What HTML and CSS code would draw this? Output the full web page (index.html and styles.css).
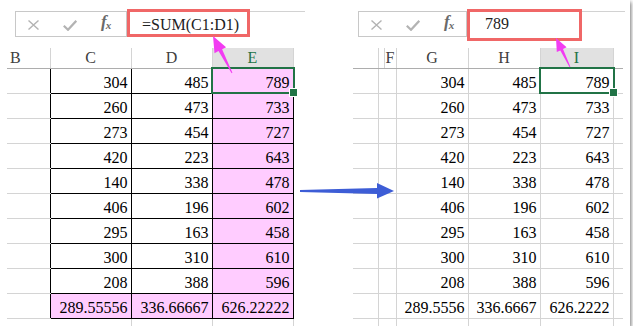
FILE: index.html
```html
<!DOCTYPE html>
<html>
<head>
<meta charset="utf-8">
<link rel="stylesheet" href="styles.css">
</head>
<body>
<div class="frame">
  <div class="panel panel-left">
    <div class="fbar">
      <div class="tools">
        <svg class="ico-x" viewBox="0 0 11 10"><path d="M0.5 0.5 L10.5 9.5 M10.5 0.5 L0.5 9.5" stroke="#b3b3b3" stroke-width="1.4" fill="none"/></svg>
        <svg class="ico-v" viewBox="0 0 14 11"><path d="M0.8 5.8 L5 9.8 L13.3 0.8" stroke="#b3b3b3" stroke-width="2.2" fill="none"/></svg>
        <span class="fx">f<sub>x</sub></span>
      </div>
      <div class="input">=SUM(C1:D1)</div>
      <div class="rest"></div>
    </div>
    <table class="sheet sheet-left">
      <colgroup><col class="w43"><col class="w81"><col class="w81"><col class="w81"></colgroup>
      <tr class="hd"><td class="hb">B</td><td>C</td><td>D</td><td class="hsel">E</td></tr>
      <tr><td class="b"></td><td class="k">304</td><td class="k">485</td><td class="k p sel">789</td></tr>
      <tr><td class="b"></td><td class="k">260</td><td class="k">473</td><td class="k p">733</td></tr>
      <tr><td class="b"></td><td class="k">273</td><td class="k">454</td><td class="k p">727</td></tr>
      <tr><td class="b"></td><td class="k">420</td><td class="k">223</td><td class="k p">643</td></tr>
      <tr><td class="b"></td><td class="k">140</td><td class="k">338</td><td class="k p">478</td></tr>
      <tr><td class="b"></td><td class="k">406</td><td class="k">196</td><td class="k p">602</td></tr>
      <tr><td class="b"></td><td class="k">295</td><td class="k">163</td><td class="k p">458</td></tr>
      <tr><td class="b"></td><td class="k">300</td><td class="k">310</td><td class="k p">610</td></tr>
      <tr><td class="b"></td><td class="k">208</td><td class="k">388</td><td class="k p">596</td></tr>
      <tr><td class="b"></td><td class="k p">289.55556</td><td class="k p">336.66667</td><td class="k p">626.22222</td></tr>
      <tr><td class="b"></td><td class="g"></td><td class="g"></td><td class="g"></td></tr>
    </table>
  </div>
  <div class="panel panel-right">
    <div class="fbar">
      <div class="tools">
        <svg class="ico-x" viewBox="0 0 11 10"><path d="M0.5 0.5 L10.5 9.5 M10.5 0.5 L0.5 9.5" stroke="#b3b3b3" stroke-width="1.4" fill="none"/></svg>
        <svg class="ico-v" viewBox="0 0 14 11"><path d="M0.8 5.8 L5 9.8 L13.3 0.8" stroke="#b3b3b3" stroke-width="2.2" fill="none"/></svg>
        <span class="fx">f<sub>x</sub></span>
      </div>
      <div class="input">789</div>
      <div class="rest"></div>
    </div>
    <table class="sheet sheet-right">
      <colgroup><col class="w25"><col class="w18"><col class="w72"><col class="w72"><col class="w73"><col class="w10"></colgroup>
      <tr class="hd"><td></td><td class="hf">F</td><td>G</td><td>H</td><td class="hsel">I</td><td class="end"></td></tr>
      <tr><td class="g"></td><td class="g"></td><td class="g">304</td><td class="g">485</td><td class="g sel">789</td><td class="e"></td></tr>
      <tr><td class="g"></td><td class="g"></td><td class="g">260</td><td class="g">473</td><td class="g">733</td><td class="e"></td></tr>
      <tr><td class="g"></td><td class="g"></td><td class="g">273</td><td class="g">454</td><td class="g">727</td><td class="e"></td></tr>
      <tr><td class="g"></td><td class="g"></td><td class="g">420</td><td class="g">223</td><td class="g">643</td><td class="e"></td></tr>
      <tr><td class="g"></td><td class="g"></td><td class="g">140</td><td class="g">338</td><td class="g">478</td><td class="e"></td></tr>
      <tr><td class="g"></td><td class="g"></td><td class="g">406</td><td class="g">196</td><td class="g">602</td><td class="e"></td></tr>
      <tr><td class="g"></td><td class="g"></td><td class="g">295</td><td class="g">163</td><td class="g">458</td><td class="e"></td></tr>
      <tr><td class="g"></td><td class="g"></td><td class="g">300</td><td class="g">310</td><td class="g">610</td><td class="e"></td></tr>
      <tr><td class="g"></td><td class="g"></td><td class="g">208</td><td class="g">388</td><td class="g">596</td><td class="e"></td></tr>
      <tr><td class="g"></td><td class="g"></td><td class="g">289.5556</td><td class="g">336.6667</td><td class="g">626.2222</td><td class="e"></td></tr>
      <tr><td class="g"></td><td class="g"></td><td class="g"></td><td class="g"></td><td class="g"></td><td class="e"></td></tr>
    </table>
  </div>
  <svg class="arrows" width="630" height="326" viewBox="0 0 630 326">
    <polygon points="213,36 226.1,47.2 222.1,49.3 232.4,72.8 231.6,73.2 218.5,51.1 214.5,53.2" fill="#f23cf2"/>
    <polygon points="556,38 566.6,47.3 563,49 570.4,66.8 569.6,67.2 560.3,50.4 556.8,52.1" fill="#f23cf2"/>
    <polygon points="300,190 377,188 377,183 394,191 377,198.5 377,194 300,192" fill="#3d5dd6"/>
  </svg>
</div>
</body>
</html>
```

FILE: styles.css
```css
* { box-sizing: border-box; }
body {
  margin: 0;
  background: #fff;
  font-family: "Liberation Serif", "Times New Roman", serif;
}
.frame {
  position: relative;
  width: 630px;
  height: 326px;
  overflow: hidden;
  background: #fff;
  display: flex;
  box-shadow: 1px 2px 4px rgba(0, 0, 0, 0.55);
}
.panel {
  display: flex;
  flex-direction: column;
  padding-top: 9px;
}
.panel-left { width: 313px; }
.panel-right { width: 317px; padding-left: 40px; }

.fbar {
  display: flex;
  align-items: flex-start;
  height: 39px;
  flex: none;
}
.panel-left .fbar { padding-left: 15px; }
.panel-right .fbar { padding-left: 5px; }

.tools {
  margin-top: 2px;
  height: 26px;
  border: 1px solid #c8c8c8;
  display: flex;
  align-items: center;
  padding-left: 12px;
  padding-top: 2px;
  flex: none;
}
.panel-left .tools { width: 112px; }
.panel-right .tools { width: 109px; }
.ico-x { width: 11px; height: 10px; margin-right: 24px; flex: none; }
.ico-v { width: 14px; height: 11px; margin-right: 24px; flex: none; }
.fx {
  font-style: italic;
  font-weight: bold;
  color: #6a6a6a;
  font-size: 17px;
  line-height: 17px;
  margin-top: -4px;
}
.fx sub { font-size: 11px; vertical-align: -2px; margin-left: -1px; }

.input {
  border: 3px solid #f06767;
  font-size: 16px;
  color: #222;
  line-height: 16px;
  flex: none;
  white-space: nowrap;
}
.panel-left .input { width: 123px; height: 28px; padding: 5px 0 0 12px; }
.panel-right .input { width: 115px; height: 32px; padding: 4px 0 0 15px; }
.rest {
  margin-top: 2px;
  border-top: 1px solid #d2d2d2;
  flex: none;
}
.panel-left .rest { width: 55px; }
.panel-right .rest { width: 43px; }

.sheet {
  border-collapse: collapse;
  table-layout: fixed;
  font-size: 16px;
  color: #000;
  flex: none;
}
.sheet-left { margin-left: 7px; width: 286px; }
.sheet-right { width: 270px; }
.w43 { width: 43px; }
.w81 { width: 81px; }
.w25 { width: 25px; }
.w18 { width: 18px; }
.w72 { width: 72px; }
.w73 { width: 73px; }
.w10 { width: 10px; }

.sheet td {
  padding: 0 3px 2px 0;
  text-align: right;
  vertical-align: bottom;
  line-height: 16px;
  height: 25px;
  white-space: nowrap;
}
.sheet .hd td {
  height: 20px;
  vertical-align: middle;
  text-align: center;
  color: #404040;
  border-right: 1px solid #d4d4d4;
  border-bottom: 1px solid #adadad;
  padding: 0;
  line-height: 20px;
}
.sheet .hd td.hb { text-align: left; padding-left: 3px; }
.sheet .hd td.hsel { background: #e1e1e1; color: #217346; }
.sheet .hd td.end { border-right: none; }
.sheet .hd td.hf {
  text-align: left;
  padding-left: 7px;
  box-shadow: inset 5px 0 0 #fff, inset 6px 0 0 #d4d4d4;
}

.sheet td.b { border-bottom: 1px solid #d4d4d4; }
.sheet td.k { border: 1px solid #000; }
.sheet td.p { background: #ffccff; }
.sheet td.g { border-right: 1px solid #d4d4d4; border-bottom: 1px solid #d4d4d4; }
.sheet td.e { border-bottom: 1px solid #d4d4d4; }

.sel { position: relative; }
.sel::after {
  content: "";
  position: absolute;
  left: -2px;
  top: -2px;
  right: -2px;
  bottom: -1px;
  border: 2px solid #217346;
}
.sel::before {
  content: "";
  position: absolute;
  right: -5px;
  bottom: -4px;
  width: 7px;
  height: 7px;
  background: #217346;
  border: 1px solid #fff;
  z-index: 1;
}

.arrows {
  position: absolute;
  left: 0;
  top: 0;
  pointer-events: none;
}
```
